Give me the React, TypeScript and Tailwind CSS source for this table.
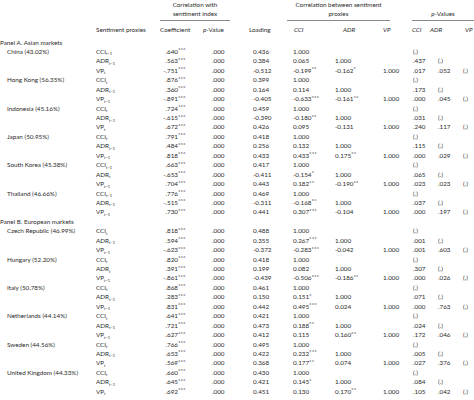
import React from "react";

type Row = {
  label?: string;
  proxy: string;
  sub: string;
  coef: string;
  load: string;
  c1?: string;
  c2?: string;
  c3?: string;
  p1?: string;
  p2?: string;
  p3?: string;
};

const Star = ({ s }: { s: string }) =>
  s ? <span className="relative -top-[1.5px] text-[6px] leading-none">{s}</span> : null;

const S = (v?: string) => {
  if (!v) return null;
  const m = v.match(/^([^*]*)(\**)$/);
  const n = m ? m[1] : v;
  const st = m ? m[2] : "";
  return (
    <>
      {n}
      <Star s={st} />
    </>
  );
};

function country(
  label: string,
  subs: [string, string, string],
  data: string[][]
): Row[] {
  const proxies = ["CCI", "ADR", "VP"];
  return data.map((d, i) => ({
    label: i === 0 ? label : undefined,
    proxy: proxies[i],
    sub: subs[i],
    coef: d[0],
    load: d[1],
    c1: d[2],
    c2: d[3],
    c3: d[4],
    p1: d[5],
    p2: d[6],
    p3: d[7],
  }));
}

const T = "t";
const T1 = "t−1";

const panelA: Row[] = [
  ...country("China (43.02%)", [T1, T1, T], [
    [".640***", "0.436", "1.000", "", "", "(.)", "", ""],
    [".563***", "0.384", "0.065", "1.000", "", ".437", "(.)", ""],
    ["-.751***", "-0.512", "-0.199**", "-0.162*", "1.000", ".017", ".052", "(.)"],
  ]),
  ...country("Hong Kong (56.35%)", [T, T1, T1], [
    [".876***", "0.399", "1.000", "", "", "(.)", "", ""],
    [".360***", "0.164", "0.114", "1.000", "", ".173", "(.)", ""],
    ["-.891***", "-0.405", "-0.633***", "-0.161**", "1.000", ".000", ".045", "(.)"],
  ]),
  ...country("Indonesia (45.16%)", [T, T1, T], [
    [".724***", "0.459", "1.000", "", "", "(.)", "", ""],
    ["-.615***", "-0.390", "-0.180**", "1.000", "", ".031", "(.)", ""],
    [".672***", "0.426", "0.095", "-0.131", "1.000", ".240", ".117", "(.)"],
  ]),
  ...country("Japan (50.95%)", [T, T1, T1], [
    [".791***", "0.418", "1.000", "", "", "(.)", "", ""],
    [".484***", "0.256", "0.132", "1.000", "", ".115", "(.)", ""],
    [".818***", "0.433", "0.433***", "0.175**", "1.000", ".000", ".029", "(.)"],
  ]),
  ...country("South Korea (45.38%)", [T1, T, T1], [
    [".663***", "0.417", "1.000", "", "", "(.)", "", ""],
    ["-.653***", "-0.411", "-0.154*", "1.000", "", ".065", "(.)", ""],
    [".704***", "0.443", "0.182**", "-0.190**", "1.000", ".023", ".023", "(.)"],
  ]),
  ...country("Thailand (46.66%)", [T1, T1, T1], [
    [".776***", "0.469", "1.000", "", "", "(.)", "", ""],
    ["-.515***", "-0.311", "-0.168**", "1.000", "", ".037", "(.)", ""],
    [".730***", "0.441", "0.307***", "-0.104", "1.000", ".000", ".197", "(.)"],
  ]),
];

const panelB: Row[] = [
  ...country("Czech Republic (46.99%)", [T, T1, T1], [
    [".818***", "0.488", "1.000", "", "", "(.)", "", ""],
    [".594***", "0.355", "0.267***", "1.000", "", ".001", "(.)", ""],
    ["-.623***", "-0.372", "-0.283***", "-0.042", "1.000", ".001", ".603", "(.)"],
  ]),
  ...country("Hungary (52.20%)", [T, T, T1], [
    [".820***", "0.418", "1.000", "", "", "(.)", "", ""],
    [".391***", "0.199", "0.082", "1.000", "", ".307", "(.)", ""],
    ["-.861***", "-0.439", "-0.506***", "-0.186**", "1.000", ".000", ".026", "(.)"],
  ]),
  ...country("Italy (50.78%)", [T, T1, T1], [
    [".868***", "0.461", "1.000", "", "", "(.)", "", ""],
    [".283***", "0.150", "0.151*", "1.000", "", ".071", "(.)", ""],
    [".831***", "0.442", "0.495***", "0.024", "1.000", ".000", ".763", "(.)"],
  ]),
  ...country("Netherlands (44.14%)", [T, T1, T1], [
    [".641***", "0.421", "1.000", "", "", "(.)", "", ""],
    [".721***", "0.473", "0.188**", "1.000", "", ".024", "(.)", ""],
    [".627***", "0.412", "0.115", "0.160**", "1.000", ".172", ".046", "(.)"],
  ]),
  ...country("Sweden (44.56%)", [T, T1, T], [
    [".766***", "0.495", "1.000", "", "", "(.)", "", ""],
    [".653***", "0.422", "0.232***", "1.000", "", ".005", "(.)", ""],
    [".569***", "0.368", "0.177**", "0.074", "1.000", ".027", ".376", "(.)"],
  ]),
  ...country("United Kingdom (44.33%)", [T, T1, T], [
    [".660***", "0.430", "1.000", "", "", "(.)", "", ""],
    [".645***", "0.421", "0.145*", "1.000", "", ".084", "(.)", ""],
    [".692***", "0.451", "0.130", "0.170**", "1.000", ".105", ".042", "(.)"],
  ]),
];

const GRID =
  "grid grid-cols-[96px_64px_43px_46px_38px_43px_45px_32px_23px_25px_19px] whitespace-nowrap";

function coefCell(v: string) {
  const m = v.match(/^([^*]*)(\**)$/);
  const n = m ? m[1] : v;
  const st = m ? m[2] : "";
  return (
    <>
      <span className="inline-block w-[18px] text-right">{n}</span>
      <Star s={st} />
    </>
  );
}

function DataRow({ r }: { r: Row }) {
  return (
    <div className={`${GRID} h-[9.45px] leading-[9.45px]`}>
      <div className="pl-[7px]">{r.label ?? ""}</div>
      <div>
        {r.proxy}
        <span className="relative top-[1.5px] text-[4px] leading-none">{r.sub}</span>
      </div>
      <div>{coefCell(r.coef)}</div>
      <div className="pl-[9px]">.000</div>
      <div className="pl-[4px]">{S(r.load)}</div>
      <div className="pl-[6px]">{S(r.c1)}</div>
      <div className="pl-[5px]">{S(r.c2)}</div>
      <div className="pl-[8px]">{S(r.c3)}</div>
      <div className="pl-[6px]">{S(r.p1)}</div>
      <div className="pl-[8px]">{S(r.p2)}</div>
      <div className="pl-[8px]">{S(r.p3)}</div>
    </div>
  );
}

export default function App() {
  return (
    <div
      className="w-[474px] h-[400px] overflow-hidden bg-white text-[#2b2b2b] text-[6.3px]"
      style={{ fontFamily: "Lato, 'Open Sans', sans-serif" }}
    >
      {/* group headers */}
      <div className={`${GRID} leading-[9px] items-end`}>
        <div className="col-start-3 col-span-2">
          <div className="w-[70px] text-center pb-[2px] border-b border-[#8a8a8a]">
            <div>Correlation with</div>
            <div>sentiment index</div>
          </div>
        </div>
        <div className="col-start-6 col-span-3">
          <div className="w-[103px] text-center pb-[2px] border-b border-[#8a8a8a]">
            <div>Correlation between sentiment</div>
            <div>proxies</div>
          </div>
        </div>
        <div className="col-start-9 col-span-3">
          <div className="ml-[5px] w-[62px] text-center pb-[2px] border-b border-[#8a8a8a]">
            <div>
              <span className="italic">p</span>-Values
            </div>
          </div>
        </div>
      </div>
      {/* column headers */}
      <div className={`${GRID} leading-[9px] pt-[4px] pb-[3.5px]`}>
        <div></div>
        <div>Sentiment proxies</div>
        <div>Coefficient</div>
        <div className="pl-0">
          <span className="italic">p</span>-Value
        </div>
        <div>Loading</div>
        <div className="pl-[7px] italic">CCI</div>
        <div className="pl-[13px] italic">ADR</div>
        <div className="pl-[8px] italic">VP</div>
        <div className="pl-[5px] italic">CCI</div>
        <div className="pl-0 italic">ADR</div>
        <div className="pl-[10px] italic">VP</div>
      </div>
      <div className="h-[9.45px] leading-[9.45px]">Panel A. Asian markets</div>
      {panelA.map((r, i) => (
        <DataRow key={"a" + i} r={r} />
      ))}
      <div className="h-[9.45px] leading-[9.45px]">Panel B. European markets</div>
      {panelB.map((r, i) => (
        <DataRow key={"b" + i} r={r} />
      ))}
    </div>
  );
}
